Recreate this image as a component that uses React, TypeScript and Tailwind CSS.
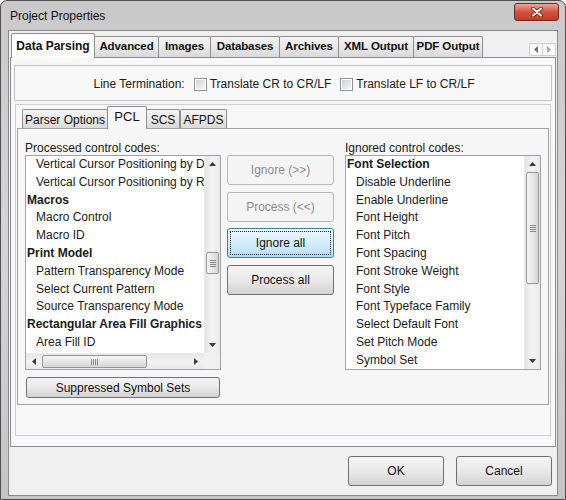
import React from 'react';

type Dir = 'up' | 'down' | 'left' | 'right';

const Tri = ({ dir, color = '#3a3a3a' }: { dir: Dir; color?: string }) => {
  const vert = dir === 'up' || dir === 'down';
  const d: Record<Dir, string> = {
    up: 'M0 4 L3.5 0 L7 4Z',
    down: 'M0 0 L7 0 L3.5 4Z',
    left: 'M4 0 L4 7 L0 3.5Z',
    right: 'M0 0 L4 3.5 L0 7Z',
  };
  return (
    <svg width={vert ? 7 : 4} height={vert ? 4 : 7} viewBox={vert ? '0 0 7 4' : '0 0 4 7'}>
      <path d={d[dir]} fill={color} />
    </svg>
  );
};

const VScroll = ({ thumbTop, thumbH }: { thumbTop: number; thumbH: number }) => (
  <div className="w-[16px] h-full flex flex-col bg-gradient-to-r from-[#e6e6e6] via-[#f3f3f3] to-[#e9e9e9] border-l border-[#ececec]">
    <div className="h-[16px] flex items-center justify-center"><Tri dir="up" /></div>
    <div className="flex-1 flex flex-col px-[1px]">
      <div style={{ height: thumbTop }} />
      <div
        style={{ height: thumbH }}
        className="rounded-[2px] border border-[#979797] bg-gradient-to-r from-[#f5f5f5] via-[#e7e7e7] to-[#d5d5d5] flex flex-col items-center justify-center gap-[1px]"
      >
        <div className="w-[6px] h-[1px] bg-[#8a8a8a]" />
        <div className="w-[6px] h-[1px] bg-[#8a8a8a]" />
        <div className="w-[6px] h-[1px] bg-[#8a8a8a]" />
        <div className="w-[6px] h-[1px] bg-[#8a8a8a]" />
      </div>
    </div>
    <div className="h-[16px] flex items-center justify-center"><Tri dir="down" /></div>
  </div>
);

const HScroll = () => (
  <div className="h-[16px] flex-1 flex flex-row bg-gradient-to-b from-[#e6e6e6] via-[#f3f3f3] to-[#e9e9e9] border-t border-[#ececec]">
    <div className="w-[16px] flex items-center justify-center"><Tri dir="left" /></div>
    <div className="flex-1 flex flex-row py-[1px]">
      <div className="w-[105px] rounded-[2px] border border-[#979797] bg-gradient-to-b from-[#f5f5f5] via-[#e7e7e7] to-[#d5d5d5] flex flex-row items-center justify-center gap-[1px]">
        <div className="h-[6px] w-[1px] bg-[#8a8a8a]" />
        <div className="h-[6px] w-[1px] bg-[#8a8a8a]" />
        <div className="h-[6px] w-[1px] bg-[#8a8a8a]" />
        <div className="h-[6px] w-[1px] bg-[#8a8a8a]" />
      </div>
    </div>
    <div className="w-[16px] flex items-center justify-center"><Tri dir="right" /></div>
  </div>
);

type Item = { t: string; h?: boolean };

const Row = ({ it }: { it: Item }) => (
  <div
    className={
      'h-[17.8px] leading-[17.8px] whitespace-nowrap text-[12px] text-[#1a1a1a] ' +
      (it.h ? 'font-bold pl-[1px]' : 'pl-[10px]')
    }
  >
    {it.t}
  </div>
);

const leftItems: Item[] = [
  { t: 'Vertical Cursor Positioning by Decipoints' },
  { t: 'Vertical Cursor Positioning by Rows' },
  { t: 'Macros', h: true },
  { t: 'Macro Control' },
  { t: 'Macro ID' },
  { t: 'Print Model', h: true },
  { t: 'Pattern Transparency Mode' },
  { t: 'Select Current Pattern' },
  { t: 'Source Transparency Mode' },
  { t: 'Rectangular Area Fill Graphics', h: true },
  { t: 'Area Fill ID' },
];

const rightItems: Item[] = [
  { t: 'Font Selection', h: true },
  { t: 'Disable Underline' },
  { t: 'Enable Underline' },
  { t: 'Font Height' },
  { t: 'Font Pitch' },
  { t: 'Font Spacing' },
  { t: 'Font Stroke Weight' },
  { t: 'Font Style' },
  { t: 'Font Typeface Family' },
  { t: 'Select Default Font' },
  { t: 'Set Pitch Mode' },
  { t: 'Symbol Set' },
];

const Checkbox = () => (
  <div className="w-[13px] h-[13px] border border-[#8e8f8f] bg-white flex items-center justify-center">
    <div className="w-[9px] h-[9px] bg-gradient-to-br from-[#cfd2d6] to-[#f7f7f7]" />
  </div>
);

const mainTabs = [
  { t: 'Data Parsing', w: 84, sel: true },
  { t: 'Advanced', w: 65 },
  { t: 'Images', w: 53 },
  { t: 'Databases', w: 70 },
  { t: 'Archives', w: 60 },
  { t: 'XML Output', w: 76 },
  { t: 'PDF Output', w: 70 },
];

const subTabs = [
  { t: 'Parser Options', w: 86 },
  { t: 'PCL', w: 38, sel: true },
  { t: 'SCS', w: 34 },
  { t: 'AFPDS', w: 47 },
];

const btnNormal =
  'rounded-[3px] border border-[#707070] bg-gradient-to-b from-[#f4f4f4] via-[#e9e9e9] to-[#d3d3d3] flex items-center justify-center text-[12px] text-[#111]';

export default function App() {
  return (
    <div className="w-[566px] h-[500px] font-['Liberation_Sans',Arial,sans-serif] bg-white">
      <div className="w-[566px] h-[500px] flex flex-col border border-[#4f4f4f] rounded-t-[7px] bg-gradient-to-b from-[#c9c9c9] via-[#d5d5d5] to-[#c4c4c4] overflow-hidden">
        {/* Title bar */}
        <div className="h-[29px] flex flex-row items-start shrink-0">
          <div className="pl-[9px] pt-[8px] text-[12px] text-[#111] leading-[14px]">Project Properties</div>
          <div className="ml-auto mr-[6px] mt-[2px] w-[45px] h-[18px] rounded-[3px] border border-[#6e2a1f] bg-gradient-to-b from-[#e9a897] via-[#d2533c] to-[#c23b22] flex items-center justify-center">
            <svg width="12" height="10" viewBox="0 0 12 10">
              <path d="M2 1.5 L10 8.5 M10 1.5 L2 8.5" stroke="#5b1a10" strokeWidth="3.6" strokeLinecap="round" />
              <path d="M2 1.5 L10 8.5 M10 1.5 L2 8.5" stroke="#ffffff" strokeWidth="2" strokeLinecap="round" />
            </svg>
          </div>
        </div>

        {/* Body */}
        <div className="mx-[7px] h-[466px] border border-[#8a8a8a] bg-[#f0f0f0] flex flex-col shrink-0">
          {/* Main tab strip */}
          <div className="h-[26px] pt-[2px] pl-[2px] pr-[1px] flex flex-row items-end relative z-10">
            {mainTabs.map((tb) =>
              tb.sel ? (
                <div
                  key={tb.t}
                  style={{ width: tb.w }}
                  className="h-[25px] -mb-[1px] bg-white border border-b-0 border-[#898c95] rounded-t-[2px] flex items-center justify-center text-[12px] font-bold text-[#111] pb-[1px]"
                >
                  {tb.t}
                </div>
              ) : (
                <div
                  key={tb.t}
                  style={{ width: tb.w }}
                  className="h-[21px] -ml-[1px] border border-b-0 border-[#8e8f8f] rounded-t-[2px] bg-gradient-to-b from-[#f3f3f3] via-[#e9e9e9] to-[#d9d9d9] flex items-center justify-center text-[11.5px] font-bold text-[#111] tracking-[-0.1px]"
                >
                  {tb.t}
                </div>
              )
            )}
            <div className="ml-auto mb-[1px] h-[13px] w-[27px] border border-[#d0d0d0] bg-[#fafafa] flex flex-row">
              <div className="flex-1 flex items-center justify-center border-r border-[#d0d0d0]"><Tri dir="left" color="#707070" /></div>
              <div className="flex-1 flex items-center justify-center"><Tri dir="right" color="#a8a8a8" /></div>
            </div>
          </div>

          {/* Tab panel */}
          <div className="mx-[1px] h-[390px] border border-[#898c95] bg-[#f8f8f8] flex flex-col pt-[7px] px-[3px]">
            {/* Line Termination */}
            <div className="h-[36px] border border-[#c3c3c3] flex flex-row items-center justify-center text-[12px] text-[#1a1a1a] pt-[2px] pl-[2px]">
              <span>Line Termination:</span>
              <div className="ml-[9px]"><Checkbox /></div>
              <span className="ml-[3px]">Translate CR to CR/LF</span>
              <div className="ml-[9px]"><Checkbox /></div>
              <span className="ml-[3px]">Translate LF to CR/LF</span>
            </div>

            {/* Group */}
            <div className="mt-[3px] mx-[1px] h-[332px] border border-[#cfcfcf] flex flex-col pt-[2px] px-[1px]">
              {/* sub tab strip */}
              <div className="h-[21px] flex flex-row items-end pl-[5px] relative z-10">
                {subTabs.map((tb) =>
                  tb.sel ? (
                    <div
                      key={tb.t}
                      style={{ width: tb.w + 2 }}
                      className="h-[23px] -mb-[1px] -mx-[1px] bg-[#f7f7f7] border border-b-0 border-[#898c95] rounded-t-[2px] flex items-center justify-center text-[13px] text-[#111] pb-[2px]"
                    >
                      {tb.t}
                    </div>
                  ) : (
                    <div
                      key={tb.t}
                      style={{ width: tb.w }}
                      className="h-[19px] border border-b-0 border-[#8e8f8f] rounded-t-[2px] bg-gradient-to-b from-[#f3f3f3] via-[#e9e9e9] to-[#d9d9d9] flex items-center justify-center text-[12px] text-[#111] pt-[1px]"
                    >
                      {tb.t}
                    </div>
                  )
                )}
              </div>

              {/* sub panel */}
              <div className="h-[277px] border border-[#a3a3a3] bg-[#f6f6f6] flex flex-row items-start pt-[12px] pl-[7px]">
                {/* left column */}
                <div className="w-[196px] flex flex-col">
                  <div className="h-[14px] leading-[14px] text-[12px] text-[#1a1a1a]">Processed control codes:</div>
                  <div className="h-[215px] border border-[#9ea3aa] bg-white flex flex-col">
                    <div className="h-[197px] flex flex-row">
                      <div className="flex-1 overflow-hidden">
                        {leftItems.map((it) => (
                          <Row key={it.t} it={it} />
                        ))}
                      </div>
                      <VScroll thumbTop={80} thumbH={22} />
                    </div>
                    <div className="h-[16px] flex flex-row">
                      <HScroll />
                      <div className="w-[16px] bg-[#f0f0f0]" />
                    </div>
                  </div>
                  <div className={'mt-[7px] ml-[1px] w-[194px] h-[21px] ' + btnNormal}>Suppressed Symbol Sets</div>
                </div>

                {/* middle buttons */}
                <div className="ml-[6px] mt-[14px] w-[107px] flex flex-col gap-[6.7px]">
                  <div className="h-[30px] rounded-[3px] border border-[#b5b9bd] bg-[#f4f4f4] flex items-center justify-center text-[12px] text-[#8c8c8c]">
                    Ignore (&gt;&gt;)
                  </div>
                  <div className="h-[30px] rounded-[3px] border border-[#b5b9bd] bg-[#f4f4f4] flex items-center justify-center text-[12px] text-[#8c8c8c]">
                    Process (&lt;&lt;)
                  </div>
                  <div className="h-[30px] rounded-[3px] border border-[#3c7fb1] bg-gradient-to-b from-[#ecf7fd] via-[#d5eefc] to-[#b3dcf5] p-[2px]">
                    <div className="h-full border border-dotted border-[#222] flex items-center justify-center text-[12px] text-[#111]">
                      Ignore all
                    </div>
                  </div>
                  <div className={'h-[30px] ' + btnNormal}>Process all</div>
                </div>

                {/* right column */}
                <div className="ml-[11px] w-[196px] flex flex-col">
                  <div className="h-[14px] leading-[14px] text-[12px] text-[#1a1a1a]">Ignored control codes:</div>
                  <div className="h-[215px] border border-[#9ea3aa] bg-white flex flex-row">
                    <div className="flex-1 overflow-hidden">
                      {rightItems.map((it) => (
                        <Row key={it.t} it={it} />
                      ))}
                    </div>
                    <VScroll thumbTop={0} thumbH={112} />
                  </div>
                </div>
              </div>
            </div>
          </div>

          {/* Footer */}
          <div className="h-[48px] flex flex-row justify-end pt-[9px] pr-[5px] gap-[12px]">
            <div className={'w-[96px] h-[30px] ' + btnNormal}>OK</div>
            <div className={'w-[96px] h-[30px] ' + btnNormal}>Cancel</div>
          </div>
        </div>
      </div>
    </div>
  );
}
